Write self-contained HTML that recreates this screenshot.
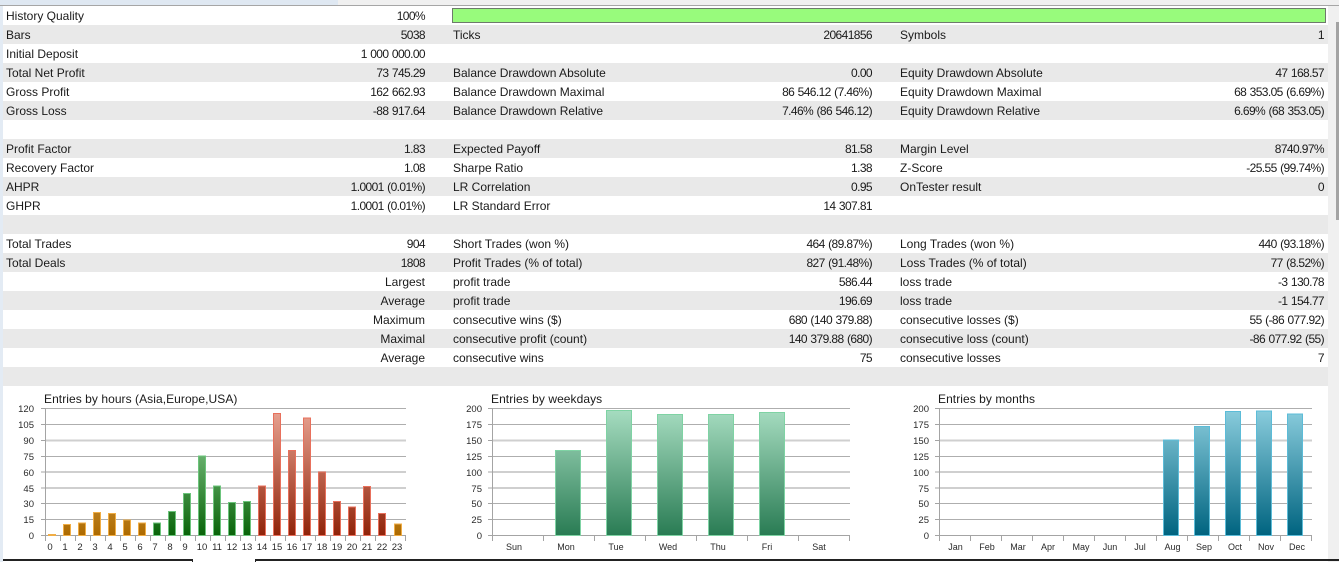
<!DOCTYPE html>
<html><head><meta charset="utf-8"><style>
html,body{margin:0;padding:0;background:#f0f0f0}
body{width:1339px;height:562px;position:relative;overflow:hidden;font-family:"Liberation Sans",sans-serif;font-size:12px;color:#1a1a1a}
#top1{position:absolute;left:0;top:0;width:338px;height:5px;background:#dfe8f2}
#top2{position:absolute;left:0;top:5px;width:1339px;height:1px;background:#a6a6a6}
#left{position:absolute;left:0;top:6px;width:3px;height:556px;background:#e3ebf4}
#main{position:absolute;left:3px;top:6px;width:1325px;height:556px;background:#fff}
.r{position:absolute;left:0;width:1325px;height:19px;line-height:19px}
.g{background:#e9e9e9}
.r span{position:absolute;top:1px;white-space:nowrap}
.a{left:3px}.c{left:450px}.e{left:897px}
.b{right:903px;letter-spacing:-.6px;word-spacing:.7px}.d{right:456px;letter-spacing:-.6px;word-spacing:.7px}.f{right:4px;letter-spacing:-.6px;word-spacing:.7px}
.r span.x{letter-spacing:0;word-spacing:0}
#q{position:absolute;left:449px;top:2px;width:872px;height:13px;background:#98fb7c;border:1px solid #6e7a6c}
#sb{position:absolute;left:1336px;top:22px;width:3px;height:198px;background:#a3a3a3}
svg{position:absolute;left:0;top:0}
svg text{font-family:"Liberation Sans",sans-serif}
.t{font-size:12px;fill:#1a1a1a;letter-spacing:.06px}
.l{font-size:9.5px;fill:#2a2a2a}
.gl{stroke:#aeaeae;stroke-width:1}
.gt{stroke:#cfcfcf;stroke-width:2}
.ax{stroke:#a4a4a4;stroke-width:1;fill:none}
.o{fill:url(#go);stroke:#f0ad45}
.n{fill:url(#gn);stroke:#6cc47c}
.h{fill:url(#gr);stroke:#e8705c}
.w{fill:url(#gw);stroke:#7fd3a4}
.m{fill:url(#gm);stroke:#5cbcd8}
#bl1{position:absolute;left:3px;top:559px;width:190px;height:2px;background:#222}
#bl2{position:absolute;left:255px;top:559px;width:1084px;height:2px;background:#222}
#bl3{position:absolute;left:192px;top:559px;width:1px;height:3px;background:#222}
#bl4{position:absolute;left:255px;top:559px;width:1px;height:3px;background:#222}
</style></head><body>
<div id="top1"></div><div id="top2"></div><div id="left"></div>
<div id="main">
<div class="r" style="top:0"><span class="a">History Quality</span><span class="b">100%</span><div id="q"></div></div>
<div class="r g" style="top:19px"><span class="a">Bars</span><span class="b">5038</span><span class="c">Ticks</span><span class="d">20641856</span><span class="e">Symbols</span><span class="f">1</span></div>
<div class="r" style="top:38px"><span class="a">Initial Deposit</span><span class="b">1 000 000.00</span></div>
<div class="r g" style="top:57px"><span class="a">Total Net Profit</span><span class="b">73 745.29</span><span class="c">Balance Drawdown Absolute</span><span class="d">0.00</span><span class="e">Equity Drawdown Absolute</span><span class="f">47 168.57</span></div>
<div class="r" style="top:76px"><span class="a">Gross Profit</span><span class="b">162 662.93</span><span class="c">Balance Drawdown Maximal</span><span class="d">86 546.12 (7.46%)</span><span class="e">Equity Drawdown Maximal</span><span class="f">68 353.05 (6.69%)</span></div>
<div class="r g" style="top:95px"><span class="a">Gross Loss</span><span class="b">-88 917.64</span><span class="c">Balance Drawdown Relative</span><span class="d">7.46% (86 546.12)</span><span class="e">Equity Drawdown Relative</span><span class="f">6.69% (68 353.05)</span></div>
<div class="r g" style="top:133px"><span class="a">Profit Factor</span><span class="b">1.83</span><span class="c">Expected Payoff</span><span class="d">81.58</span><span class="e">Margin Level</span><span class="f">8740.97%</span></div>
<div class="r" style="top:152px"><span class="a">Recovery Factor</span><span class="b">1.08</span><span class="c">Sharpe Ratio</span><span class="d">1.38</span><span class="e">Z-Score</span><span class="f">-25.55 (99.74%)</span></div>
<div class="r g" style="top:171px"><span class="a">AHPR</span><span class="b">1.0001 (0.01%)</span><span class="c">LR Correlation</span><span class="d">0.95</span><span class="e">OnTester result</span><span class="f">0</span></div>
<div class="r" style="top:190px"><span class="a">GHPR</span><span class="b">1.0001 (0.01%)</span><span class="c">LR Standard Error</span><span class="d">14 307.81</span></div>
<div class="r g" style="top:209px"></div>
<div class="r" style="top:228px"><span class="a">Total Trades</span><span class="b">904</span><span class="c">Short Trades (won %)</span><span class="d">464 (89.87%)</span><span class="e">Long Trades (won %)</span><span class="f">440 (93.18%)</span></div>
<div class="r g" style="top:247px"><span class="a">Total Deals</span><span class="b">1808</span><span class="c">Profit Trades (% of total)</span><span class="d">827 (91.48%)</span><span class="e">Loss Trades (% of total)</span><span class="f">77 (8.52%)</span></div>
<div class="r" style="top:266px"><span class="b x">Largest</span><span class="c">profit trade</span><span class="d">586.44</span><span class="e">loss trade</span><span class="f">-3 130.78</span></div>
<div class="r g" style="top:285px"><span class="b x">Average</span><span class="c">profit trade</span><span class="d">196.69</span><span class="e">loss trade</span><span class="f">-1 154.77</span></div>
<div class="r" style="top:304px"><span class="b x">Maximum</span><span class="c">consecutive wins ($)</span><span class="d">680 (140 379.88)</span><span class="e">consecutive losses ($)</span><span class="f">55 (-86 077.92)</span></div>
<div class="r g" style="top:323px"><span class="b x">Maximal</span><span class="c">consecutive profit (count)</span><span class="d">140 379.88 (680)</span><span class="e">consecutive loss (count)</span><span class="f">-86 077.92 (55)</span></div>
<div class="r" style="top:342px"><span class="b x">Average</span><span class="c">consecutive wins</span><span class="d">75</span><span class="e">consecutive losses</span><span class="f">7</span></div>
<div class="r g" style="top:361px"></div>
</div>
<div id="sb"></div>
<svg width="1339" height="562" viewBox="0 0 1339 562">
<defs>
<linearGradient id="go" gradientUnits="userSpaceOnUse" x1="0" y1="408" x2="0" y2="535"><stop offset="0" stop-color="#f4d49c"/><stop offset="1" stop-color="#ad6a00"/></linearGradient>
<linearGradient id="gn" gradientUnits="userSpaceOnUse" x1="0" y1="408" x2="0" y2="535"><stop offset="0" stop-color="#9edca6"/><stop offset="1" stop-color="#0a640a"/></linearGradient>
<linearGradient id="gr" gradientUnits="userSpaceOnUse" x1="0" y1="408" x2="0" y2="535"><stop offset="0" stop-color="#eaa594"/><stop offset="1" stop-color="#90240a"/></linearGradient>
<linearGradient id="gw" gradientUnits="userSpaceOnUse" x1="0" y1="408" x2="0" y2="535"><stop offset="0" stop-color="#a8dec2"/><stop offset="1" stop-color="#2a7c54"/></linearGradient>
<linearGradient id="gm" gradientUnits="userSpaceOnUse" x1="0" y1="408" x2="0" y2="535"><stop offset="0" stop-color="#8ccede"/><stop offset="1" stop-color="#006480"/></linearGradient>
</defs>
<text class="t" x="44" y="403">Entries by hours (Asia,Europe,USA)</text>
<text class="t" x="491" y="403">Entries by weekdays</text>
<text class="t" x="938" y="403">Entries by months</text>

<g class="gl">
<path d="M45 408.5H406M45 424.5H406M45 456.5H406M45 503.5H406M45 519.5H406M492 408.5H850M492 424.5H850M492 456.5H850M492 503.5H850M492 519.5H850M939 408.5H1312M939 424.5H1312M939 456.5H1312M939 503.5H1312M939 519.5H1312"/>
</g>
<g class="gt">
<path d="M45 440.5H406M45 472H406M45 488H406M492 440.5H850M492 472H850M492 488H850M939 440.5H1312M939 472H1312M939 488H1312"/>
</g>
<path class="ax" d="M45.5 408V541M41 535.5H406M41 519.5H45M41 503.5H45M41 488H45M41 472H45M41 456.5H45M41 440.5H45M41 424.5H45M41 408.5H45"/>
<path class="ax" d="M60.5 535V541M75.5 535V541M90.5 535V541M105.5 535V541M120.5 535V541M135.5 535V541M150.5 535V541M165.5 535V541M180.5 535V541M195.5 535V541M210.5 535V541M225.5 535V541M240.5 535V541M255.5 535V541M270.5 535V541M285.5 535V541M300.5 535V541M315.5 535V541M330.5 535V541M345.5 535V541M360.5 535V541M375.5 535V541M390.5 535V541M405.5 535V541"/>
<path class="ax" d="M492.5 408V541M488 535.5H850M488 519.5H492M488 503.5H492M488 488H492M488 472H492M488 456.5H492M488 440.5H492M488 424.5H492M488 408.5H492M543.5 535V541M594.5 535V541M645.5 535V541M696.5 535V541M747.5 535V541M798.5 535V541M849.5 535V541"/>
<path class="ax" d="M939.5 408V541M935 535.5H1312M935 519.5H939M935 503.5H939M935 488H939M935 472H939M935 456.5H939M935 440.5H939M935 424.5H939M935 408.5H939M970.5 535V541M1001.5 535V541M1032.5 535V541M1063.5 535V541M1094.5 535V541M1125.5 535V541M1156.5 535V541M1187.5 535V541M1218.5 535V541M1249.5 535V541M1280.5 535V541M1311.5 535V541"/>

<g class="o">
<rect x="48.5" y="534.5" width="7" height="1"/><rect x="63.5" y="524.5" width="7" height="11"/><rect x="78.5" y="523" width="7" height="12.5"/><rect x="93.5" y="512.5" width="7" height="23"/><rect x="108.5" y="513.5" width="7" height="22"/><rect x="123.5" y="520" width="7" height="15.5"/><rect x="138.5" y="523" width="7" height="12.5"/>
<rect x="394.5" y="524" width="7" height="11.5"/>
</g>
<g class="n">
<rect x="153.5" y="523" width="7" height="12.5"/><rect x="168.5" y="511.5" width="7" height="24"/><rect x="183.5" y="493.5" width="7" height="42"/><rect x="198.5" y="456" width="7" height="79.5"/><rect x="213.5" y="486" width="7" height="49.5"/><rect x="228.5" y="502.5" width="7" height="33"/><rect x="243.5" y="501.5" width="7" height="34"/>
</g>
<g class="h">
<rect x="258.5" y="486" width="7" height="49.5"/><rect x="273.5" y="413.5" width="7" height="122"/><rect x="288.5" y="450.5" width="7" height="85"/><rect x="303.5" y="418" width="7" height="117.5"/><rect x="318.5" y="472" width="7" height="63.5"/><rect x="333.5" y="501.5" width="7" height="34"/><rect x="348.5" y="507" width="7" height="28.5"/><rect x="363.5" y="486.5" width="7" height="49"/><rect x="378.5" y="513.5" width="7" height="22"/>
</g>
<g class="w">
<rect x="555.5" y="450.5" width="25" height="85"/><rect x="606.5" y="410.5" width="25" height="125"/><rect x="657.5" y="414.5" width="25" height="121"/><rect x="708.5" y="414.5" width="25" height="121"/><rect x="759.5" y="412.5" width="25" height="123"/>
</g>
<g class="m">
<rect x="1163.5" y="440" width="15" height="95.5"/><rect x="1194.5" y="426.5" width="15" height="109"/><rect x="1225.5" y="411.5" width="15" height="124"/><rect x="1256.5" y="411" width="15" height="124.5"/><rect x="1287.5" y="414" width="15" height="121.5"/>
</g>

<g class="l" text-anchor="end">
<text x="34" y="412">120</text><text x="34" y="428">105</text><text x="34" y="444">90</text><text x="34" y="460">75</text><text x="34" y="476">60</text><text x="34" y="492">45</text><text x="34" y="507">30</text><text x="34" y="523">15</text><text x="34" y="539">0</text>
<text x="482" y="412">200</text><text x="482" y="428">175</text><text x="482" y="444">150</text><text x="482" y="460">125</text><text x="482" y="476">100</text><text x="482" y="492">75</text><text x="482" y="507">50</text><text x="482" y="523">25</text><text x="482" y="539">0</text>
<text x="929" y="412">200</text><text x="929" y="428">175</text><text x="929" y="444">150</text><text x="929" y="460">125</text><text x="929" y="476">100</text><text x="929" y="492">75</text><text x="929" y="507">50</text><text x="929" y="523">25</text><text x="929" y="539">0</text>
</g>
<g class="l" text-anchor="middle">
<text x="50" y="550">0</text><text x="65" y="550">1</text><text x="80" y="550">2</text><text x="95" y="550">3</text><text x="110" y="550">4</text><text x="125" y="550">5</text><text x="140" y="550">6</text><text x="155" y="550">7</text><text x="170" y="550">8</text><text x="185" y="550">9</text><text x="202" y="550">10</text><text x="217" y="550">11</text><text x="232" y="550">12</text><text x="247" y="550">13</text><text x="262" y="550">14</text><text x="277" y="550">15</text><text x="292" y="550">16</text><text x="307" y="550">17</text><text x="322" y="550">18</text><text x="337" y="550">19</text><text x="352" y="550">20</text><text x="367" y="550">21</text><text x="382" y="550">22</text><text x="397" y="550">23</text>
</g>
<g class="l" style="font-size:9px" text-anchor="middle">
<text x="514" y="550">Sun</text><text x="566" y="550">Mon</text><text x="616" y="550">Tue</text><text x="668" y="550">Wed</text><text x="718" y="550">Thu</text><text x="767" y="550">Fri</text><text x="819" y="550">Sat</text>
<text x="955.5" y="550">Jan</text><text x="987" y="550">Feb</text><text x="1018" y="550">Mar</text><text x="1048" y="550">Apr</text><text x="1081" y="550">May</text><text x="1110" y="550">Jun</text><text x="1140" y="550">Jul</text><text x="1172.5" y="550">Aug</text><text x="1204" y="550">Sep</text><text x="1235" y="550">Oct</text><text x="1266" y="550">Nov</text><text x="1297" y="550">Dec</text>
</g>
</svg>
<div id="bl1"></div><div id="bl2"></div><div id="bl3"></div><div id="bl4"></div>
</body></html>
